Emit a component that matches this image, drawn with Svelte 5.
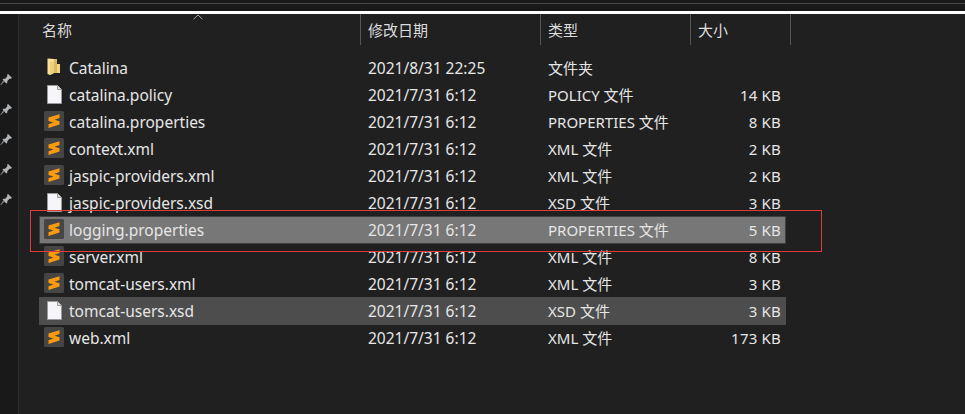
<script>
	const files = [
		{ name: "Catalina", date: "2021/8/31 22:25", type: "文件夹", size: "", icon: "folder" },
		{ name: "catalina.policy", date: "2021/7/31 6:12", type: "POLICY 文件", size: "14 KB", icon: "file" },
		{ name: "catalina.properties", date: "2021/7/31 6:12", type: "PROPERTIES 文件", size: "8 KB", icon: "sublime" },
		{ name: "context.xml", date: "2021/7/31 6:12", type: "XML 文件", size: "2 KB", icon: "sublime" },
		{ name: "jaspic-providers.xml", date: "2021/7/31 6:12", type: "XML 文件", size: "2 KB", icon: "sublime" },
		{ name: "jaspic-providers.xsd", date: "2021/7/31 6:12", type: "XSD 文件", size: "3 KB", icon: "file" },
		{ name: "logging.properties", date: "2021/7/31 6:12", type: "PROPERTIES 文件", size: "5 KB", icon: "sublime", state: "selected" },
		{ name: "server.xml", date: "2021/7/31 6:12", type: "XML 文件", size: "8 KB", icon: "sublime" },
		{ name: "tomcat-users.xml", date: "2021/7/31 6:12", type: "XML 文件", size: "3 KB", icon: "sublime" },
		{ name: "tomcat-users.xsd", date: "2021/7/31 6:12", type: "XSD 文件", size: "3 KB", icon: "file", state: "hover" },
		{ name: "web.xml", date: "2021/7/31 6:12", type: "XML 文件", size: "173 KB", icon: "sublime" }
	];
	const pins = [0, 1, 2, 3, 4];
</script>

<div class="window">
	<div class="topbar"></div>
	<div class="whitebar"></div>
	<div class="body">
		<aside class="sidebar">
			{#each pins as p}
				<svg class="pin" width="13" height="13" viewBox="0 0 12 12">
					<path d="M7.2 0.8 L11.2 4.6 L9.8 5.4 L8.8 5.2 L6.8 7.4 L6.6 9.2 L5.8 9.8 L2.4 6.2 L3 5.4 L4.8 5.2 L6.8 3 L6.6 2 Z" fill="#b2b6b8" />
					<path d="M3.8 8 L0.6 11.4 L0.2 11 L2.8 7.2 Z" fill="#8f9295" />
				</svg>
			{/each}
		</aside>
		<main class="list">
			<div class="header">
				<svg class="caret" width="10" height="6" viewBox="0 0 10 6">
					<path d="M0.5 5.2 L5 1 L9.5 5.2" fill="none" stroke="#a8a8a8" />
				</svg>
				<div class="col col-name">名称</div>
				<div class="col col-date">修改日期</div>
				<div class="col col-type">类型</div>
				<div class="col col-size">大小</div>
			</div>
			<div class="rows">
				{#each files as f}
					<div class="row {f.state ?? ''}">
						<span class="icon">
							{#if f.icon === "folder"}
								<svg width="14" height="18" viewBox="0 0 14 18">
									<path d="M3 1 H10 V15 H3 Z" fill="#dcb767" />
									<path d="M10 6 H13 V15 H10 Z" fill="#f6d67f" />
									<path d="M0.5 0.5 L7 1 V15 L3 17 L0.5 16 Z" fill="#fbe29a" />
									<path d="M7 3 V15 L3 17 V4 Z" fill="#f3cf78" />
								</svg>
							{:else if f.icon === "file"}
								<svg width="15" height="19" viewBox="0 0 15 19">
									<path d="M0.5 0.5 H10.5 L14.5 4.5 V18.5 H0.5 Z" fill="#f6f6fa" stroke="#9a9a9a" />
									<path d="M10.5 0.5 V4.5 H14.5" fill="#dcdce0" stroke="#9a9a9a" />
								</svg>
							{:else}
								<svg width="20" height="20" viewBox="0 0 20 20">
									<rect width="20" height="20" rx="1.5" fill="#454545" />
									<path d="M15.5 3.2 V7 L10.5 8.7 L15.5 10.3 V13.6 L4.5 17 V13.2 L9.5 11.6 L4.5 10 V6.6 Z" fill="#fb9a0d" />
								</svg>
							{/if}
						</span>
						<span class="name">{f.name}</span>
						<span class="date">{f.date}</span>
						<span class="type">{f.type}</span>
						<span class="size">{f.size}</span>
					</div>
				{/each}
			</div>
			<div class="annotation"></div>
		</main>
	</div>
</div>

<style>
	:global(body) {
		margin: 0;
		background: #202020;
	}
	.window {
		display: flex;
		flex-direction: column;
		width: 965px;
		height: 414px;
		overflow: hidden;
		font-family: "Noto Sans", "Noto Sans CJK SC", sans-serif;
		font-size: 15.5px;
		color: #e6e6e6;
	}
	.topbar {
		box-sizing: border-box;
		height: 11px;
		background: #191919;
		border-top: 3px solid #191919;
		box-shadow: inset 0 1px 0 #4a4a4a;
	}
	.whitebar {
		height: 3px;
		background: #ffffff;
	}
	.body {
		display: flex;
		flex: 1;
		min-height: 0;
	}
	.sidebar {
		box-sizing: border-box;
		width: 19px;
		padding-top: 59px;
		background: #191919;
		border-right: 1px solid #2b2b2b;
		display: flex;
		flex-direction: column;
		align-items: flex-start;
		gap: 17px;
	}
	.pin {
		display: block;
	}
	.list {
		position: relative;
		flex: 1;
		background: #202020;
	}
	.header {
		position: relative;
		display: grid;
		grid-template-columns: 342px 180px 150px 100px;
		height: 31px;
		margin-bottom: 9px;
	}
	.caret {
		position: absolute;
		left: 174px;
		top: 0;
	}
	.col {
		box-sizing: border-box;
		height: 31px;
		line-height: 33px;
		padding-left: 7px;
		border-right: 1px solid #555555;
		color: #dcdcdc;
		font-size: 15px;
	}
	.col-name {
		padding-left: 23px;
	}
	.rows {
		margin-left: 20px;
		width: 747px;
	}
	.row {
		box-sizing: border-box;
		display: grid;
		grid-template-columns: 30px 299px 180px 150px 83px;
		align-items: start;
		height: 27px;
		line-height: 28px;
		white-space: nowrap;
	}
	.row.selected {
		height: 28px;
		margin-bottom: -1px;
		background: #777777;
		box-shadow: inset 0 0 0 1px #3f3f3f;
	}
	.row.hover {
		height: 28px;
		margin-bottom: -1px;
		background: #4d4d4d;
	}
	.type {
		font-size: 15px;
	}
	.icon {
		display: flex;
		justify-content: center;
		align-items: center;
		height: 20px;
		margin-top: 3px;
	}
	.icon svg {
		display: block;
	}
	.size {
		text-align: right;
		font-size: 15px;
		letter-spacing: 0.2px;
	}
	.annotation {
		position: absolute;
		left: 11px;
		top: 196px;
		width: 790px;
		height: 40px;
		border: 1px solid #e33a3a;
	}
</style>
